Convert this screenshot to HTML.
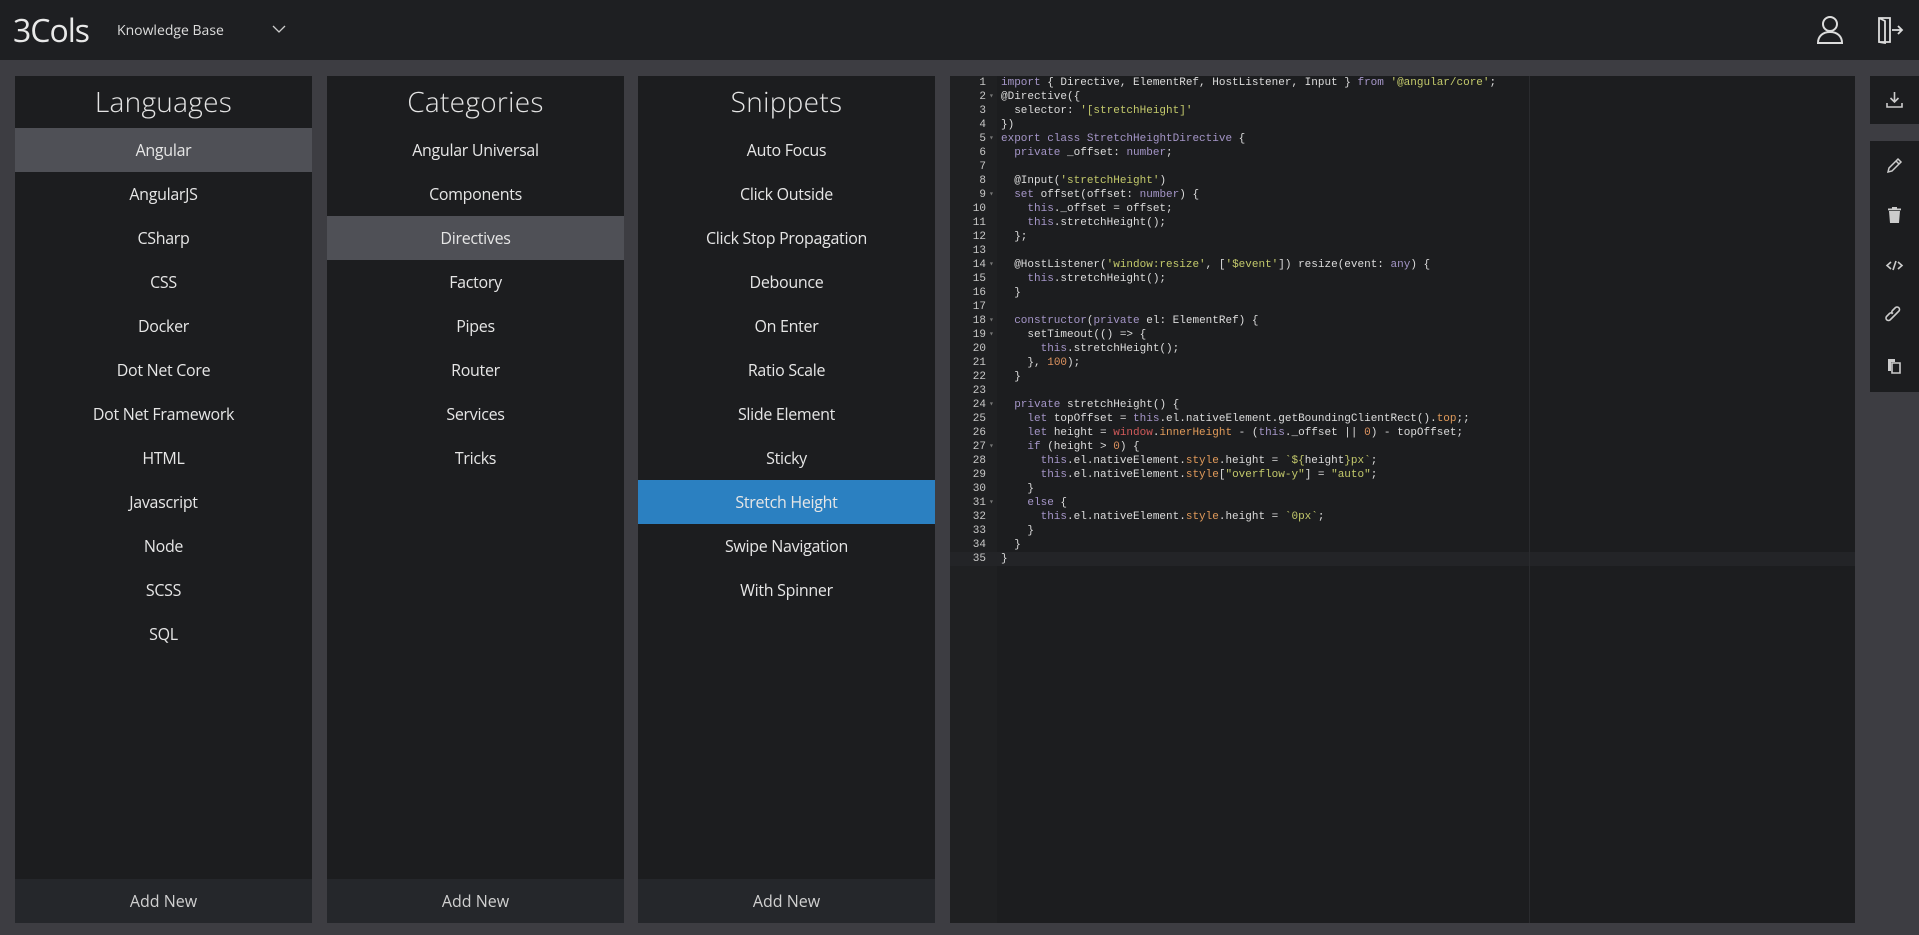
<!DOCTYPE html>
<html><head><meta charset="utf-8"><style>
*{margin:0;padding:0;box-sizing:border-box}
body{width:1919px;height:935px;background:#3d3d42;font-family:"Open Sans","Liberation Sans",sans-serif;color:#e4e4e4;overflow:hidden;position:relative}
.hdr{position:absolute;left:0;top:0;width:1919px;height:60px;background:#1e1f22}
.logo{position:absolute;left:13px;top:9px;font-size:32px;letter-spacing:-1px;color:#e8e8e8}
.kb{position:absolute;left:117px;top:21px;font-size:14px;color:#ddd}
.col{position:absolute;top:76px;width:297px;height:847px;background:#1c1d1f}
.col h2{font-weight:300;font-size:28px;text-align:center;height:52px;line-height:52px;color:#e4e4e4;letter-spacing:0.3px}
.it{height:44px;line-height:44px;text-align:center;font-size:16px;color:#e6e6e6;letter-spacing:-0.3px}
.sel{background:#4f5056}
.blue{background:#2b80c1}
.foot{position:absolute;bottom:0;left:0;right:0;height:44px;line-height:44px;background:#25272b;text-align:center;font-size:16px;color:#d0d0d0}
.code{position:absolute;left:950px;top:76px;width:905px;height:847px;background:#1c1d1f}
.gut{position:absolute;left:0;top:0;width:47px;height:847px;background:#1f2022}
.pm{position:absolute;left:579px;top:0;width:1px;height:847px;background:#2a2b2e}
.lines{position:absolute;left:0;top:0;font-family:"Liberation Mono",monospace;font-size:11px;line-height:14px;white-space:pre}
.ln{position:absolute;left:0;width:36px;text-align:right;color:#c8c8c8}
.fa{position:absolute;left:39px;color:#777;font-size:8px}
.tx{position:absolute;left:51px;color:#dcdcdc}
.k{color:#a596c8}.s{color:#c3c96b}.n{color:#de935f}.r{color:#d15a5a}.o{color:#e09a5a}
.tb{position:absolute;left:1870px;width:49px;background:#1c1d1f}
.ic{position:absolute;left:15px}
</style></head><body>
<div class="hdr">
<div class="logo">3Cols</div>
<div class="kb">Knowledge Base</div>
<svg style="position:absolute;left:272px;top:24px" width="14" height="10" viewBox="0 0 14 10"><path d="M1 2l6 6 6-6" fill="none" stroke="#ccc" stroke-width="1.3"/></svg>
<svg style="position:absolute;left:1816px;top:15px" width="28" height="30" viewBox="0 0 28 30"><circle cx="14" cy="9" r="7" fill="none" stroke="#ddd" stroke-width="2"/><path d="M2 28c0-7 5-11 12-11s12 4 12 11z" fill="none" stroke="#ddd" stroke-width="2"/></svg>
<svg style="position:absolute;left:1876px;top:16px" width="28" height="28" viewBox="0 0 28 28"><path d="M3 2h11v24H3z M3 2l6 3v22l-6-1" fill="none" stroke="#ddd" stroke-width="1.8"/><path d="M16 14h10M22 10l4 4-4 4" fill="none" stroke="#ddd" stroke-width="1.8"/></svg>
</div>

<div class="col" style="left:15px"><h2>Languages</h2>
<div class="it sel">Angular</div><div class="it">AngularJS</div><div class="it">CSharp</div><div class="it">CSS</div><div class="it">Docker</div><div class="it">Dot Net Core</div><div class="it">Dot Net Framework</div><div class="it">HTML</div><div class="it">Javascript</div><div class="it">Node</div><div class="it">SCSS</div><div class="it">SQL</div>
<div class="foot">Add New</div></div>

<div class="col" style="left:327px"><h2>Categories</h2>
<div class="it">Angular Universal</div><div class="it">Components</div><div class="it sel">Directives</div><div class="it">Factory</div><div class="it">Pipes</div><div class="it">Router</div><div class="it">Services</div><div class="it">Tricks</div>
<div class="foot">Add New</div></div>

<div class="col" style="left:638px"><h2>Snippets</h2>
<div class="it">Auto Focus</div><div class="it">Click Outside</div><div class="it">Click Stop Propagation</div><div class="it">Debounce</div><div class="it">On Enter</div><div class="it">Ratio Scale</div><div class="it">Slide Element</div><div class="it">Sticky</div><div class="it blue">Stretch Height</div><div class="it">Swipe Navigation</div><div class="it">With Spinner</div>
<div class="foot">Add New</div></div>

<div class="code">
<div class="gut"></div>
<div style="position:absolute;left:0;top:476px;width:905px;height:14px;background:#232427"></div>
<div class="pm"></div>
<div class="lines" id="L"></div>
</div>

<div class="tb" style="top:76px;height:48px">
<svg class="ic" style="top:14px" width="19" height="19" viewBox="0 0 19 19"><path d="M9.5 2v10M5.5 8l4 4 4-4M2 13v4h15v-4" fill="none" stroke="#ccc" stroke-width="1.6"/></svg>
</div>
<div class="tb" style="top:141px;height:251px">
<svg class="ic" style="top:15px" width="19" height="19" viewBox="0 0 19 19"><path d="M3 16l1-4L13 3l3 3-9 9z M11 5l3 3" fill="none" stroke="#ccc" stroke-width="1.5"/></svg>
<svg class="ic" style="top:65px" width="19" height="19" viewBox="0 0 19 19"><path d="M4 5h11l-1 12H5z" fill="#ccc"/><rect x="3" y="2.5" width="13" height="1.8" fill="#ccc"/><rect x="7" y="1" width="5" height="2" fill="#ccc"/></svg>
<svg class="ic" style="top:115px" width="19" height="19" viewBox="0 0 19 19"><path d="M6 6l-4 3.5L6 13M13 6l4 3.5-4 3.5M11 5l-3 9" fill="none" stroke="#ccc" stroke-width="1.6"/></svg>
<svg class="ic" style="top:165px" width="19" height="19" viewBox="0 0 19 19"><path d="M8 11l-3 3a2.5 2.5 0 0 1-3.5-3.5l3-3a2.5 2.5 0 0 1 3.5 0M11 8l3-3a2.5 2.5 0 0 0-3.5-3.5l-3 3a2.5 2.5 0 0 0 0 3.5M7 12l5-5" fill="none" stroke="#ccc" stroke-width="1.6"/></svg>
<svg class="ic" style="top:215px" width="19" height="19" viewBox="0 0 19 19"><path d="M3 3h7v3H6v9H3z" fill="#ccc"/><path d="M7 7h8v10H7z" fill="none" stroke="#ccc" stroke-width="1.6"/></svg>
</div>

<script>
var code=[
['<span class="k">import</span> { Directive, ElementRef, HostListener, Input } <span class="k">from</span> <span class="s">\'@angular/core\'</span>;',0],
['@Directive({',1],
['  selector: <span class="s">\'[stretchHeight]\'</span>',0],
['})',0],
['<span class="k">export class</span> <span class="k">StretchHeightDirective</span> {',1],
['  <span class="k">private</span> _offset: <span class="k">number</span>;',0],
['',0],
['  @Input(<span class="s">\'stretchHeight\'</span>)',0],
['  <span class="k">set</span> offset(offset: <span class="k">number</span>) {',1],
['    <span class="k">this</span>._offset = offset;',0],
['    <span class="k">this</span>.stretchHeight();',0],
['  };',0],
['',0],
['  @HostListener(<span class="s">\'window:resize\'</span>, [<span class="s">\'$event\'</span>]) resize(event: <span class="k">any</span>) {',1],
['    <span class="k">this</span>.stretchHeight();',0],
['  }',0],
['',0],
['  <span class="k">constructor</span>(<span class="k">private</span> el: ElementRef) {',1],
['    setTimeout(() => {',1],
['      <span class="k">this</span>.stretchHeight();',0],
['    }, <span class="n">100</span>);',0],
['  }',0],
['',0],
['  <span class="k">private</span> stretchHeight() {',1],
['    <span class="k">let</span> topOffset = <span class="k">this</span>.el.nativeElement.getBoundingClientRect().<span class="o">top</span>;;',0],
['    <span class="k">let</span> height = <span class="r">window</span>.<span class="o">innerHeight</span> - (<span class="k">this</span>._offset || <span class="n">0</span>) - topOffset;',0],
['    <span class="k">if</span> (height > <span class="n">0</span>) {',1],
['      <span class="k">this</span>.el.nativeElement.<span class="o">style</span>.height = <span class="s">`${</span>height<span class="s">}px`</span>;',0],
['      <span class="k">this</span>.el.nativeElement.<span class="o">style</span>[<span class="s">"overflow-y"</span>] = <span class="s">"auto"</span>;',0],
['    }',0],
['    <span class="k">else</span> {',1],
['      <span class="k">this</span>.el.nativeElement.<span class="o">style</span>.height = <span class="s">`0px`</span>;',0],
['    }',0],
['  }',0],
['}',0]];
var h='';
for(var i=0;i<code.length;i++){var t=i*14+0;
h+='<div class="ln" style="top:'+t+'px">'+(i+1)+'</div>';
if(code[i][1])h+='<div class="fa" style="top:'+t+'px">&#9662;</div>';
h+='<div class="tx" style="top:'+t+'px">'+code[i][0]+'</div>';}
document.getElementById('L').innerHTML=h;
</script>
</body></html>
